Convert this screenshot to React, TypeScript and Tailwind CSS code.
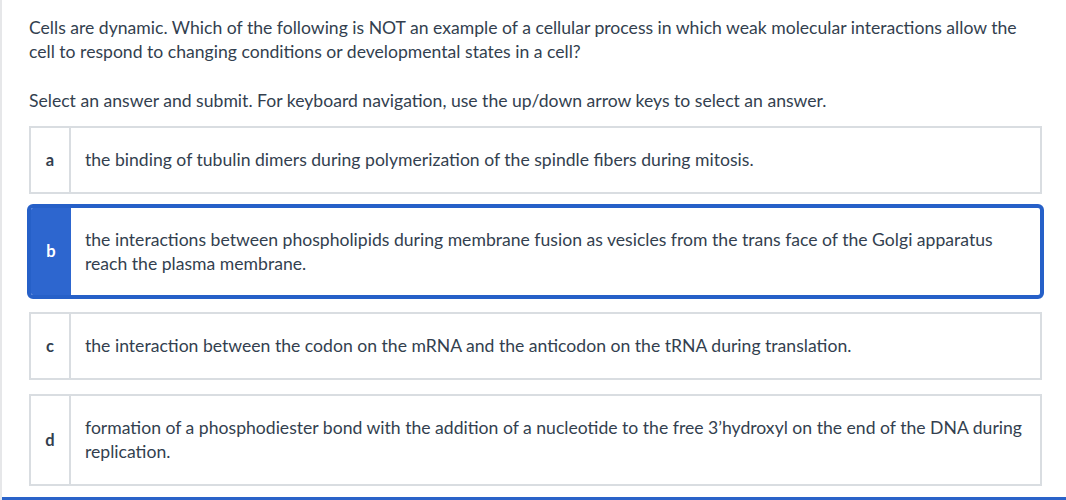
const OPTIONS = [
  {
    key: "a",
    lines: ["the binding of tubulin dimers during polymerization of the spindle fibers during mitosis."],
  },
  {
    key: "b",
    lines: [
      "the interactions between phospholipids during membrane fusion as vesicles from the trans face of the Golgi apparatus",
      "reach the plasma membrane.",
    ],
  },
  {
    key: "c",
    lines: ["the interaction between the codon on the mRNA and the anticodon on the tRNA during translation."],
  },
  {
    key: "d",
    lines: [
      "formation of a phosphodiester bond with the addition of a nucleotide to the free 3\u2019hydroxyl on the end of the DNA during",
      "replication.",
    ],
  },
]

export default function App() {
  const selected = "b"

  return (
    <div
      className="h-[500px] overflow-hidden bg-white border-l-2 border-[#e6e7e9] flex flex-col text-[#333f4f]"
      style={{ fontFamily: "Lato, 'Noto Sans', sans-serif" }}
    >
      <div className="pl-[27px] pr-[22px] pt-[16px] flex-1">
        <p className="text-[17.6px] leading-[24px] whitespace-nowrap">
          Cells are dynamic. Which of the following is NOT an example of a cellular process in which weak molecular interactions allow the
          <br />
          cell to respond to changing conditions or developmental states in a cell?
        </p>
        <p className="mt-[25px] text-[17.6px] leading-[24px] whitespace-nowrap">
          Select an answer and submit. For keyboard navigation, use the up/down arrow keys to select an answer.
        </p>

        <div className="mt-[13px] mr-[2px] flex flex-col">
          {OPTIONS.map((o, i) => {
            const isSel = o.key === selected
            return (
              <div
                key={o.key}
                className={
                  isSel
                    ? "flex border-4 border-[#2660c8] rounded-[6px] -mx-[2px] mt-[10px] -mb-[1px] overflow-hidden"
                    : i === 0
                      ? "flex border-2 border-[#d9dde1]"
                      : "flex border-2 border-[#d9dde1] mt-[14px]"
                }
              >
                <div
                  className={
                    isSel
                      ? "w-[40px] shrink-0 flex items-center justify-center bg-[#2d66cf] text-white font-bold text-[16.5px]"
                      : "w-[40px] shrink-0 flex items-center justify-center border-r-2 border-[#d9dde1] font-bold text-[16.5px]"
                  }
                >
                  {o.key}
                </div>
                <div
                  className={
                    isSel
                      ? "flex-1 pl-[14px] pr-[8px] py-[19.5px] text-[17.6px] leading-[24px] whitespace-nowrap"
                      : "flex-1 pl-[14px] pr-[8px] py-[20px] text-[17.6px] leading-[24px] whitespace-nowrap"
                  }
                >
                  {o.lines.map((l, j) => (
                    <div key={j}>{l}</div>
                  ))}
                </div>
              </div>
            )
          })}
        </div>
      </div>
      <div className="h-[3px] bg-[#2a63c9] shrink-0" />
    </div>
  )
}
